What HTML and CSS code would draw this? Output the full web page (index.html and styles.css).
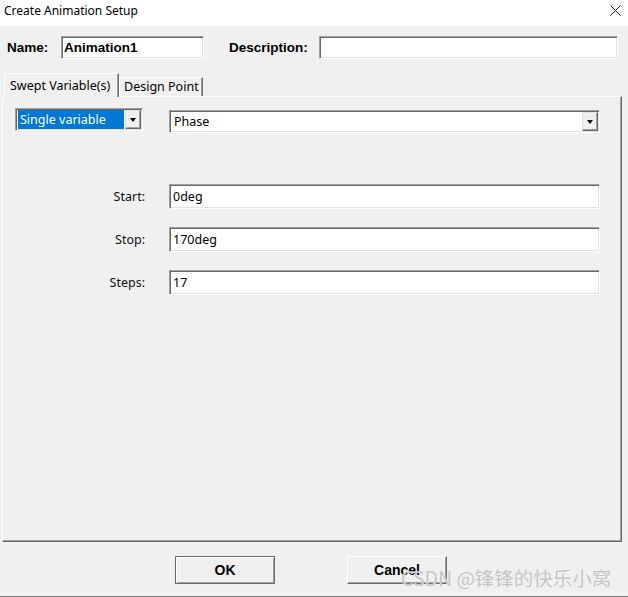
FILE: index.html
```html
<!DOCTYPE html>
<html lang="en">
<head>
    <meta charset="utf-8">
    <title>Create Animation Setup</title>
    <link rel="stylesheet" href="styles.css">
</head>
<body>

    <div class="window">
        <div class="titlebar">
            <span class="title">Create Animation Setup</span>
            <svg class="close" width="11" height="11" viewBox="0 0 11 11">
                <path d="M0.5 0.5 L10.5 10.5 M10.5 0.5 L0.5 10.5" stroke="#222" stroke-width="1" fill="none"/>
            </svg>
        </div>

        <div class="dialog">
            <div class="name-row">
                <span class="lbl-bold name-lbl">Name:</span>
                <div class="field name-field">Animation1</div>
                <span class="lbl-bold desc-lbl">Description:</span>
                <div class="field desc-field"></div>
            </div>

            <div class="tabs">
                <div class="tab active">Swept Variable(s)</div>
                <div class="tab">Design Point</div>
            </div>

            <div class="panel">
                <div class="combo-row">
                    <div class="field combo combo-type">
                        <span class="combo-value selected">Single variable</span>
                        <span class="combo-btn"><span class="arrow"></span></span>
                    </div>
                    <div class="field combo combo-var">
                        <span class="combo-value">Phase</span>
                        <span class="combo-btn"><span class="arrow"></span></span>
                    </div>
                </div>

                <div class="range-grid">
                    <span class="row-lbl">Start:</span>
                    <div class="field range-field">0deg</div>
                    <span class="row-lbl">Stop:</span>
                    <div class="field range-field">170deg</div>
                    <span class="row-lbl">Steps:</span>
                    <div class="field range-field">17</div>
                </div>
            </div>

            <div class="buttons">
                <button class="btn btn-default">OK</button>
                <button class="btn">Cancel</button>
            </div>

            <div class="watermark">CSDN @锋锋的快乐小窝</div>
        </div>
    </div>

</body>
</html>
```

FILE: styles.css
```css
* {
    margin: 0;
    padding: 0;
    box-sizing: border-box;
}
body {
    background: #fff;
    font: 12px "Noto Sans", "Noto Sans CJK SC", sans-serif;
    color: #000;
}
.window {
    width: 628px;
    height: 597px;
}
.titlebar {
    height: 26px;
    background: #fff;
    display: flex;
    align-items: flex-start;
    justify-content: space-between;
    padding: 3px 7px 0 4px;
}
.title {
    font-size: 12px;
    line-height: 16px;
    color: #000;
}
.close {
    margin-top: 2px;
}
.dialog {
    position: relative;
    height: 571px;
    background: #f0f0f0;
    border-bottom: 1px solid #7a7a7a;
}

/* sunken edit box */
.field {
    background: #fff;
    border: 1px solid;
    border-color: #a0a0a0 #fff #fff #a0a0a0;
    box-shadow: inset 1px 1px #696969, inset -1px -1px #e3e3e3;
    padding-left: 3px;
    display: flex;
    align-items: center;
    font-size: 12.5px;
    white-space: nowrap;
}

.name-row {
    display: flex;
    align-items: center;
    padding-top: 10px;
}
.lbl-bold {
    font: bold 13.5px "Liberation Sans", Arial, sans-serif;
}
.name-lbl {
    width: 54px;
    margin-left: 7px;
}
.desc-lbl {
    width: 90px;
    margin-left: 25px;
}
.name-field {
    width: 143px;
    height: 23px;
    padding-left: 2px;
    font: bold 13.5px "Liberation Sans", Arial, sans-serif;
}
.desc-field {
    width: 299px;
    height: 23px;
}

.tabs {
    display: flex;
    align-items: flex-end;
    margin-top: 14px;
    padding-left: 4px;
    height: 23px;
    position: relative;
    z-index: 1;
}
.tab {
    height: 19px;
    border: 1px solid;
    border-bottom: 0;
    border-color: #fff #696969 #fff #fff;
    box-shadow: inset -1px 0 #a0a0a0;
    background: #f0f0f0;
    font-size: 12.5px;
    line-height: 18px;
    padding-left: 4px;
}
.tab:first-child {
    width: 115px;
    padding-left: 5px;
}
.tab:nth-child(2) {
    width: 84px;
}
.tab.active {
    height: 24px;
    margin-bottom: -1px;
    line-height: 20px;
    padding-top: 2px;
}

.panel {
    margin-left: 2px;
    width: 620px;
    height: 446px;
    border: 1px solid;
    border-color: #fff #696969 #696969 #fff;
    box-shadow: inset -1px -1px #a0a0a0;
    padding: 11px 0 0 12px;
}
.combo-row {
    display: flex;
    align-items: flex-start;
    height: 25px;
}
.combo {
    height: 23px;
    padding: 1px 1px 1px 2px;
    align-items: stretch;
}
.combo-type {
    width: 128px;
}
.combo-var {
    width: 431px;
    margin-left: 26px;
    margin-top: 2px;
    padding-left: 3px;
}
.combo-value {
    flex: 1;
    display: flex;
    align-items: center;
    padding-left: 1px;
}
.combo-value.selected {
    background: #0078d7;
    color: #fff;
    padding-left: 2px;
}
.combo-btn {
    width: 16px;
    background: #f0f0f0;
    border: 1px solid;
    border-color: #e3e3e3 #696969 #696969 #e3e3e3;
    box-shadow: inset -1px -1px #a0a0a0;
    display: flex;
    align-items: center;
    justify-content: center;
    margin-left: 1px;
}
.arrow {
    width: 0;
    height: 0;
    border-left: 3.5px solid transparent;
    border-right: 3.5px solid transparent;
    border-top: 4px solid #000;
    margin-top: 1px;
}

.range-grid {
    display: grid;
    grid-template-columns: 154px 431px;
    grid-auto-rows: 25px;
    row-gap: 18px;
    margin-top: 51px;
    align-items: center;
}
.row-lbl {
    text-align: right;
    padding-right: 24px;
    font-size: 12.5px;
    color: #111;
}
.range-field {
    height: 25px;
}

.buttons {
    display: flex;
    justify-content: center;
    gap: 72px;
    margin-top: 14px;
    padding-right: 6px;
}
.btn {
    width: 100px;
    height: 28px;
    background: #f0f0f0;
    border: 1px solid;
    border-color: #fff #696969 #696969 #fff;
    box-shadow: inset -1px -1px #a0a0a0;
    font: bold 14px "Liberation Sans", Arial, sans-serif;
    color: #000;
}
.btn-default {
    border-color: #696969;
    box-shadow: inset 1px 1px #fff, inset -1px -1px #a0a0a0;
}

.watermark {
    position: absolute;
    left: 401px;
    top: 537px;
    font: 19.5px "Noto Sans CJK SC", sans-serif;
    color: #c4c4c4;
    text-shadow: 0 0 1px #fff;
    white-space: nowrap;
}
```
